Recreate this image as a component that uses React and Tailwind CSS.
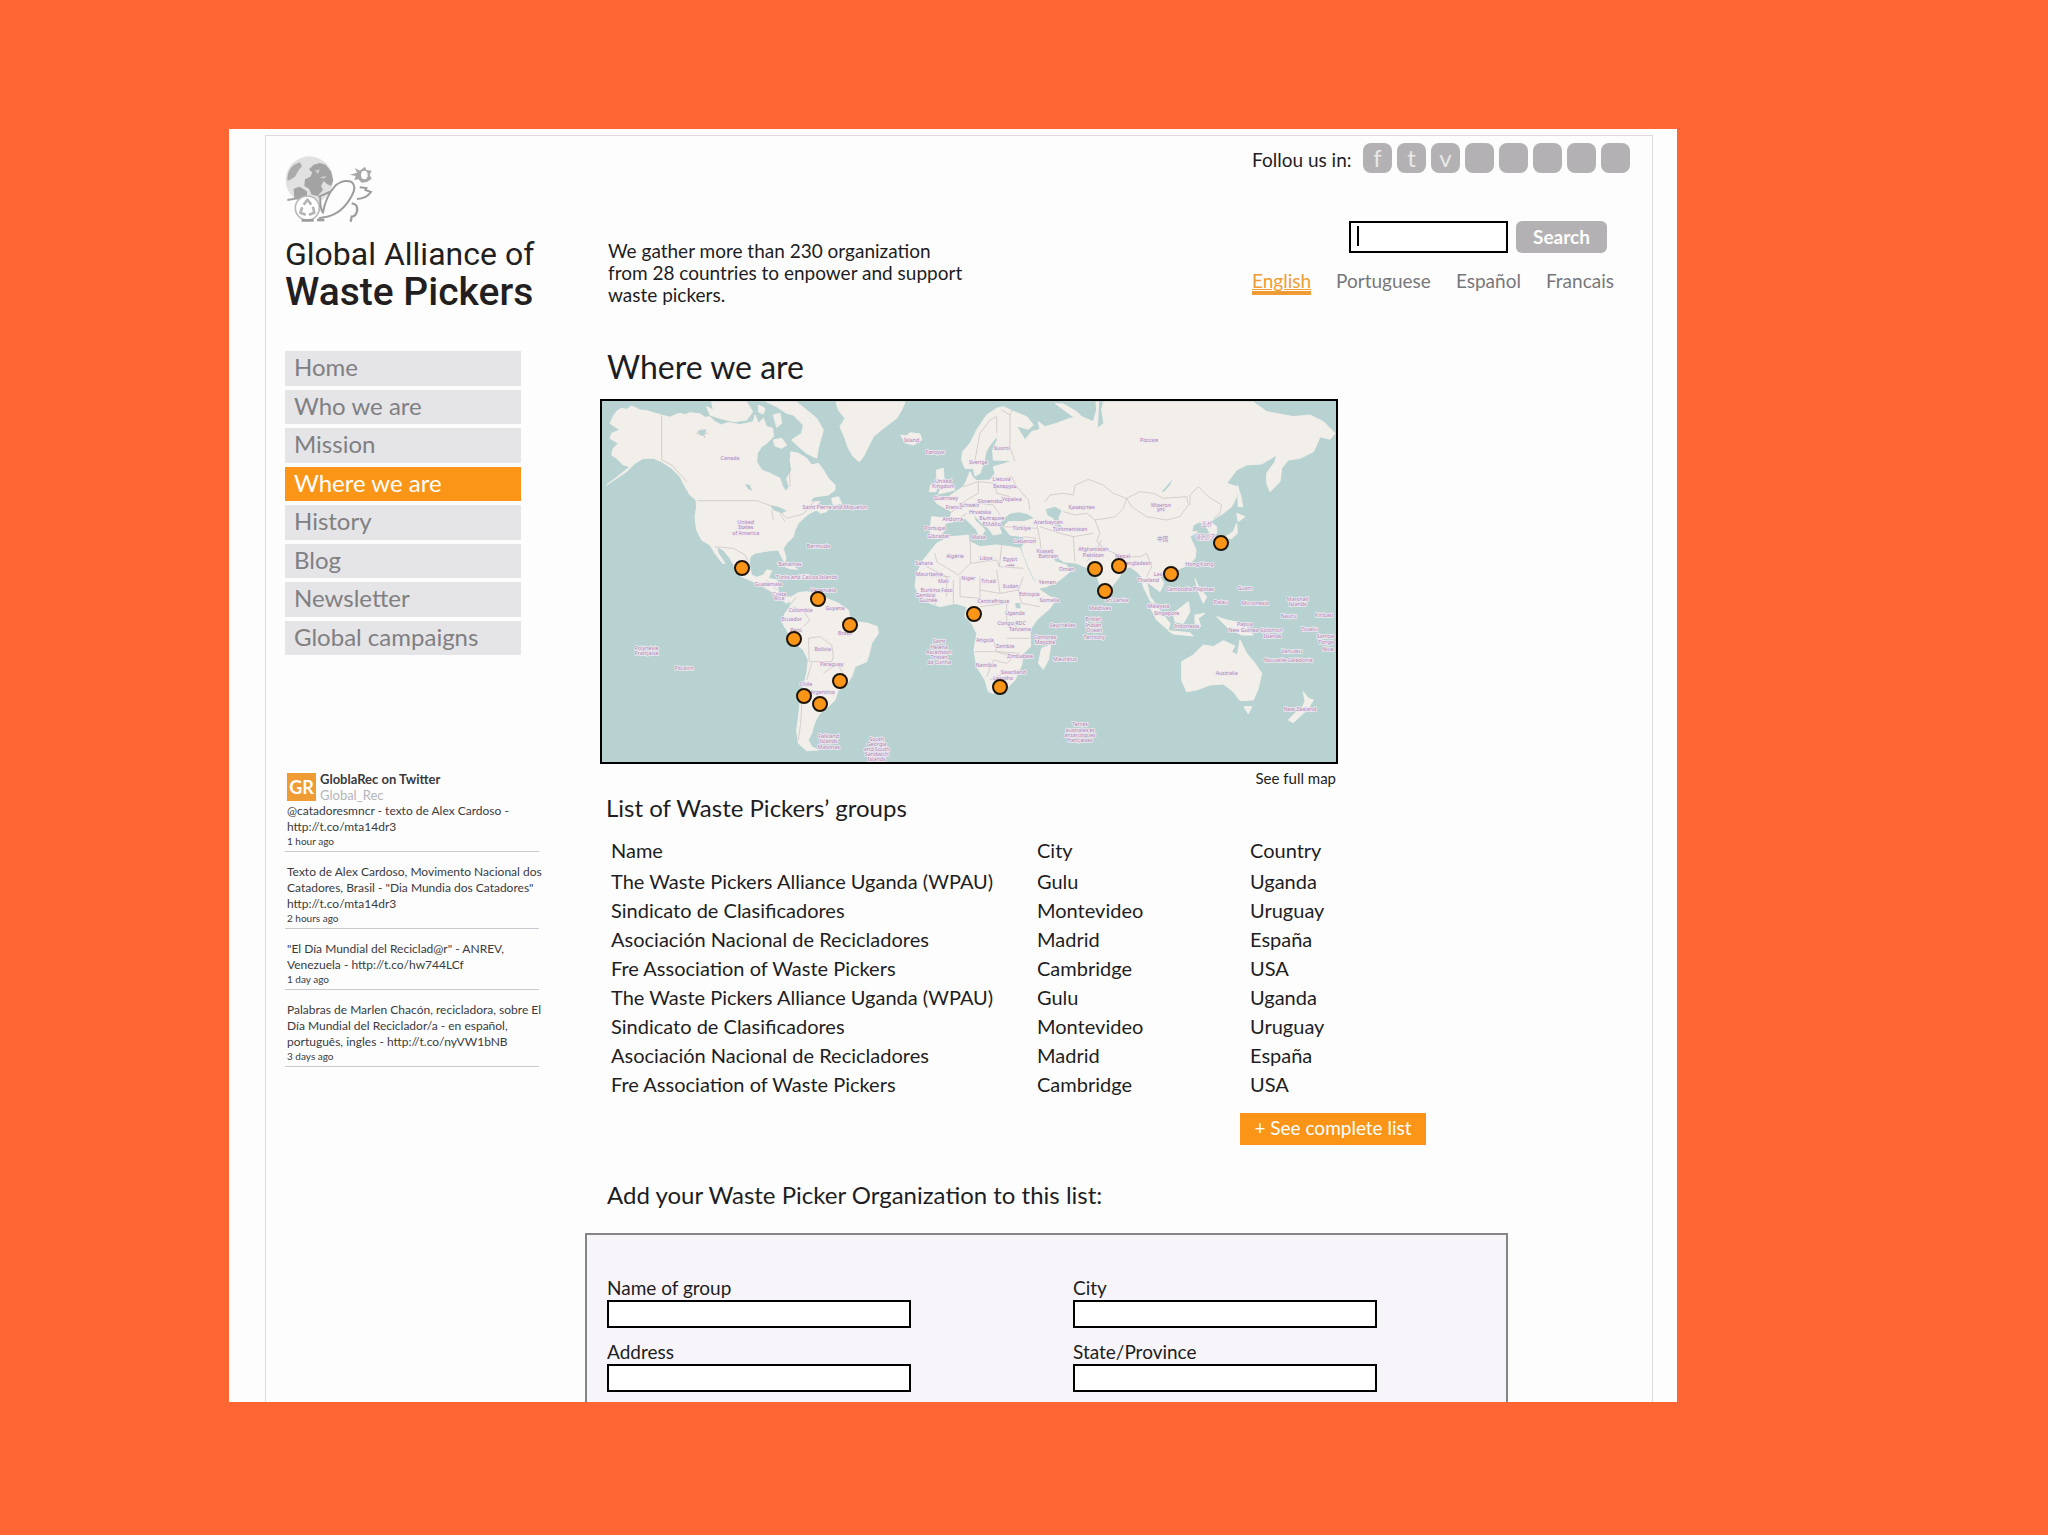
import React, { useState } from 'react';

const NAV = [
  'Home',
  'Who we are',
  'Mission',
  'Where we are',
  'History',
  'Blog',
  'Newsletter',
  'Global campaigns',
];

const LANGUAGES = ['English', 'Portuguese', 'Español', 'Francais'];

const SOCIAL = ['f', 't', 'v', '', '', '', '', ''];

const TWEETS = [
  { text: ['@catadoresmncr - texto de Alex Cardoso -', 'http://t.co/mta14dr3'], time: '1 hour ago' },
  {
    text: [
      'Texto de Alex Cardoso, Movimento Nacional dos',
      'Catadores, Brasil - "Dia Mundia dos Catadores"',
      'http://t.co/mta14dr3',
    ],
    time: '2 hours ago',
  },
  { text: ['"El Día Mundial del Reciclad@r" - ANREV,', 'Venezuela - http://t.co/hw744LCf'], time: '1 day ago' },
  {
    text: [
      'Palabras de Marlen Chacón, recicladora, sobre El',
      'Día Mundial del Reciclador/a - en español,',
      'português, ingles - http://t.co/nyVW1bNB',
    ],
    time: '3 days ago',
  },
];

const GROUPS = [
  ['The Waste Pickers Alliance Uganda (WPAU)', 'Gulu', 'Uganda'],
  ['Sindicato de Clasificadores', 'Montevideo', 'Uruguay'],
  ['Asociación Nacional de Recicladores', 'Madrid', 'España'],
  ['Fre Association of Waste Pickers', 'Cambridge', 'USA'],
];

const FIELDS = [
  { id: 'group', label: 'Name of group' },
  { id: 'city', label: 'City' },
  { id: 'address', label: 'Address' },
  { id: 'state', label: 'State/Province' },
];

const WEST_LAND = [
  'M72 75L82 62L95 55L110 58L125 48L150 60L170 62L190 68L215 75L240 82L256 74L270 70L285 74L300 68L330 72L345 82L360 80L375 95L395 105L412 98L430 100L450 104L470 100L490 95L495 75L505 100L520 85L530 110L548 115L550 140L530 160L515 170L502 190L500 215L515 240L540 250L570 265L578 290L588 305L597 290L590 265L605 240L600 215L603 185L625 190L650 205L665 225L685 220L700 240L715 265L735 285L735 300L715 315L690 318L670 322L660 335L690 335L680 345L700 355L720 345L710 365L690 370L680 360L655 372L640 385L625 400L615 420L610 440L590 460L580 475L588 505L583 515L572 495L565 480L540 482L520 485L495 490L480 500L478 530L485 555L500 562L520 555L530 540L545 542L535 565L560 570L563 590L565 610L580 625L600 620L605 630L590 640L570 625L545 605L520 590L490 575L455 560L435 545L432 525L420 505L400 480L380 470L385 490L405 520L398 520L375 490L360 465L335 450L320 420L315 380L320 350L318 330L300 315L285 290L270 260L245 235L215 215L190 205L160 205L135 220L110 245L80 265L50 285L85 258L120 230L100 225L80 205L65 195L70 175L85 160L60 145L65 130L90 120L60 100Z',
  'M530 36L620 36L650 60L680 85L700 120L690 155L685 175L680 205L650 190L620 165L605 150L635 130L640 105L610 75L590 70L560 50Z',
  'M350 50L370 60L365 36L470 36L488 65L470 90L430 95L390 85L360 75Z',
  'M505 45L525 55L520 72L506 66Z',
  'M550 75L570 70L575 100L560 112Z',
  'M550 150L575 145L590 165L575 175L555 168Z',
  'M725 325L745 320L755 340L730 345Z',
  'M738 36L945 36L935 60L920 85L880 115L850 140L835 170L820 200L808 215L790 200L775 175L765 145L750 110L765 85L745 60Z',
  'M932 135L950 138L960 128L990 132L995 150L970 165L945 158Z',
  'M560 520L590 516L622 538L600 536Z',
  'M625 555L655 553L662 565L630 567Z',
  'M605 620L625 608L650 605L680 610L710 625L745 640L775 660L780 685L800 695L835 700L862 710L865 730L845 760L838 790L830 815L795 830L785 860L765 890L745 900L735 930L710 955L690 970L680 985L670 1010L665 1030L655 1050L665 1070L685 1080L650 1082L625 1060L620 1020L625 985L630 940L640 890L650 850L655 810L640 780L610 755L590 720L575 695L585 670L600 650Z',
  'M1040 240L1060 235L1062 265L1085 290L1095 300L1045 312L1055 290L1040 270Z',
  'M1022 285L1040 280L1038 305L1018 305Z',
];

const EAST_LAND = [
  'M-85 380L-30 385L-25 365L-70 340L-75 330L-40 325L-20 310L10 290L20 270L30 245L38 262L50 272L90 270L105 250L100 230L130 222L160 212L100 210L98 180L112 150L110 140L90 165L78 185L72 215L60 250L45 258L40 235L15 235L5 210L8 185L30 160L50 120L80 75L110 55L130 50L155 62L200 80L220 105L205 118L170 108L180 125L195 150L215 125L240 118L235 95L255 110L290 100L330 85L365 80L400 95L410 60L408 36L416 36L412 115L432 100L425 60L430 36L880 36L920 65L1000 80L1050 75L1090 95L1125 130L1110 148L1080 140L1070 165L1060 185L1020 205L985 210L965 235L960 275L930 305L920 280L920 250L945 215L950 195L905 222L860 225L830 240L800 280L830 290L830 320L815 350L790 370L765 385L750 395L770 410L770 430L755 440L742 415L720 395L700 405L695 425L712 425L690 440L708 480L705 505L685 525L650 540L620 545L600 560L612 580L600 605L580 590L560 575L570 620L585 640L572 635L550 590L545 560L530 545L510 530L490 540L475 565L455 590L440 620L425 610L415 570L405 545L385 535L350 520L310 515L290 500L275 495L285 515L320 525L330 545L300 570L260 590L235 595L225 570L205 530L190 490L185 470L195 460L190 440L150 435L130 410L145 395L190 395L225 385L200 370L175 365L150 370L130 385L115 405L125 430L100 435L85 415L60 395L40 370L45 390L75 420L60 445L50 420L15 385L0 390L-20 395L-45 400L-50 425L-65 445L-85 445L-90 420Z',
  'M-70 460L-30 440L0 438L25 435L30 455L60 470L110 465L150 470L180 475L200 530L220 570L240 600L270 620L290 625L270 655L230 690L210 720L212 770L190 790L185 825L165 870L140 895L100 910L85 905L75 870L50 830L42 780L50 730L35 700L15 680L20 650L-15 640L-60 650L-90 640L-125 610L-135 590L-130 550L-110 510Z',
  'M245 775L272 765L265 810L250 838L235 820Z',
  'M285 40L310 42L350 65L375 90L340 80Z',
  'M830 370L855 380L835 395Z',
  'M830 400L832 430L815 445L790 450L770 450L800 438L820 425Z',
  'M832 285L843 320L848 350L835 350Z',
  'M665 815L700 795L730 765L760 770L790 752L825 768L815 785L832 795L840 750L860 790L885 820L905 850L895 895L880 930L840 932L820 905L790 882L750 885L710 900L680 905L665 870Z',
  'M852 950L875 950L865 972Z',
  'M1030 905L1045 925L1060 930L1045 955L1025 955L1035 935Z',
  'M1020 955L1035 965L1000 998L985 990Z',
  'M565 640L590 650L630 700L625 720L590 690Z',
  'M625 722L690 728L700 738L640 732Z',
  'M640 670L685 635L690 665L670 700L645 695Z',
  'M705 675L735 670L715 685L722 710L705 705Z',
  'M705 565L715 590L740 620L730 640L715 605Z',
  'M770 680L800 690L850 700L880 735L845 735L805 715Z',
];

const WEST_BORDERS =
  'M215 75L215 210L245 225L290 275M322 332L500 332L545 348L575 368L590 385L640 372L680 325M545 360L550 390M570 370L585 395M375 470L430 475L465 495L475 515M318 130L355 130M335 115L345 145M470 285L485 300M598 215L600 290M610 650L640 665L660 690L640 710M655 745L690 740L725 765L730 800L725 815L690 815L660 815M650 870L665 820M655 745L658 815M638 900L632 1000L625 1050M700 850L740 820L760 850M530 570L560 600M600 645L620 620';

const EAST_BORDERS =
  'M45 210L60 130L90 90L110 80L110 130M125 60L150 75L150 170L165 215M150 75L155 62M105 270L155 260L170 290L205 330L210 360M10 290L55 275L55 310L20 330M55 275L105 280L110 310L150 320M0 345L60 340L100 345L120 375M255 335L270 315L310 310L340 315L345 285L385 268L430 285L460 310L500 325L490 355L465 380L440 385L405 390L380 370L345 375L310 365M500 325L540 305L580 310L610 325L680 320L685 345L660 380L620 390L560 380L515 350L500 325M690 315L715 290L745 320L785 345L780 370L760 385M690 315L690 345M405 390L420 430L410 455L440 480L490 500L540 500L560 490L575 530L560 560M230 400L240 450L245 490L290 495M240 410L300 430L340 440L400 430M340 440L345 515M380 515L410 480L425 450M190 440L230 445M130 410L230 415M30 440L32 520L-5 555L-70 515L-75 490M32 520L110 510L118 530L125 465M118 530L190 535M110 540L120 610L175 600L190 560M0 560L0 620L60 625L60 560M60 600L120 610M175 600L185 640L240 650M60 650L140 640L140 700L170 710M45 745L100 750L110 785L45 785M110 785L180 790M140 745L210 745M80 860L100 810L140 820L160 800L110 785M90 870L130 850L180 840M-100 530L-40 560L-40 620M-75 610L-75 645M-20 570L-20 640M-90 560L-30 560M-30 370L20 330M-10 390L20 370';

const WEST_LABELS = [
  [420, 205, 'Canada'],
  [467, 397, 'United'],
  [467, 413, 'States'],
  [467, 430, 'of America'],
  [735, 352, 'Saint Pierre and Miquelon'],
  [685, 470, 'Bermuda'],
  [600, 522, 'Bahamas'],
  [650, 563, 'Turks and Caicos Islands'],
  [535, 582, 'Guatemala'],
  [568, 612, 'Costa'],
  [568, 626, 'Rica'],
  [700, 600, 'Venezuela'],
  [632, 662, 'Colombia'],
  [735, 655, 'Guyana'],
  [605, 687, 'Ecuador'],
  [618, 722, 'Perú'],
  [765, 730, 'Brasil'],
  [698, 777, 'Bolivia'],
  [725, 823, 'Paraguay'],
  [648, 882, 'Chile'],
  [697, 906, 'Argentina'],
  [170, 775, 'Polynésie'],
  [170, 790, 'Française'],
  [282, 835, 'Pitcairn'],
  [716, 1040, 'Falkland'],
  [716, 1055, 'Islands'],
  [716, 1071, 'Malvinas'],
  [860, 1047, 'South'],
  [860, 1062, 'Georgia'],
  [860, 1077, 'and South'],
  [860, 1092, 'Sandwich'],
  [860, 1107, 'Islands'],
  [1047, 755, 'Saint'],
  [1047, 771, 'Helena'],
  [1047, 787, 'Ascension'],
  [1047, 803, 'Tristan'],
  [1047, 818, 'da Cunha'],
  [965, 150, 'Ísland'],
  [1036, 188, 'Føroyar'],
  [1060, 275, 'United'],
  [1060, 290, 'Kingdom'],
  [1068, 325, 'Guernsey'],
  [1092, 352, 'France'],
  [1088, 388, 'Andorra'],
  [1035, 415, 'Portugal'],
  [1045, 440, 'Gibraltar'],
  [1095, 500, 'Algérie'],
  [1002, 520, 'Sahara'],
  [1018, 552, 'Mauritanie'],
  [1060, 575, 'Mali'],
  [1040, 600, 'Burkina Faso'],
  [1005, 615, 'Gambia'],
  [1015, 630, 'Guinée'],
];

const EAST_LABELS = [
  [567, 151, 'Россия'],
  [125, 175, 'Suomi'],
  [55, 218, 'Sverige'],
  [125, 268, 'Lietuva'],
  [135, 290, 'Беларусь'],
  [155, 328, 'Україна'],
  [90, 335, 'Slovensko'],
  [28, 347, 'Schweiz'],
  [60, 366, 'Hrvatska'],
  [95, 385, 'България'],
  [95, 403, 'Ελλάδα'],
  [55, 442, 'Malta'],
  [365, 352, 'Қазақстан'],
  [603, 345, 'Монгол'],
  [603, 358, 'улс'],
  [608, 449, '中国'],
  [265, 398, 'Azərbaycan'],
  [330, 417, 'Türkmenistan'],
  [185, 415, 'Türkiye'],
  [195, 455, 'Lebanon'],
  [255, 484, 'Kuwait'],
  [265, 500, 'Bahrain'],
  [400, 478, 'Afghanistan'],
  [400, 496, 'Pakistan'],
  [488, 498, 'Nepal'],
  [530, 520, 'Bangladesh'],
  [320, 538, 'Oman'],
  [262, 578, 'Yemen'],
  [150, 508, 'Egypt'],
  [150, 523, 'مصر'],
  [78, 505, 'Libya'],
  [25, 566, 'Niger'],
  [85, 574, 'Tchad'],
  [152, 588, 'Sudan'],
  [208, 614, 'Ethiopia'],
  [268, 632, 'Somalia'],
  [100, 635, 'Centrafrique'],
  [165, 670, 'Uganda'],
  [155, 700, 'Congo RDC'],
  [180, 718, 'Tanzania'],
  [75, 752, 'Angola'],
  [135, 769, 'Zambia'],
  [180, 800, 'Zimbabwe'],
  [78, 826, 'Namibia'],
  [160, 848, 'Swaziland'],
  [130, 864, 'Lesotho'],
  [255, 742, 'Comores'],
  [255, 757, 'Mayotte'],
  [315, 808, 'Mauritius'],
  [308, 705, 'Seychelles'],
  [400, 688, 'British'],
  [400, 705, 'Indian'],
  [403, 722, 'Ocean'],
  [403, 742, 'Territory'],
  [470, 630, 'Sri Lanka'],
  [420, 655, 'Maldives'],
  [718, 524, 'Hong Kong'],
  [595, 553, 'Lao'],
  [565, 572, 'Thailand'],
  [690, 598, 'Cambodia Pilipinas'],
  [595, 650, 'Malaysia'],
  [620, 670, 'Singapore'],
  [680, 708, 'Indonesia'],
  [740, 402, '조선'],
  [735, 443, '대한민국'],
  [855, 595, 'Guam'],
  [782, 638, 'Palau'],
  [885, 640, 'Micronesia'],
  [1013, 627, 'Marshall'],
  [1013, 643, 'Islands'],
  [986, 678, 'Nauru'],
  [1092, 676, 'Kiribati'],
  [1048, 718, 'Tuvalu'],
  [855, 703, 'Papua'],
  [850, 720, 'New Guinea'],
  [935, 722, 'Solomon'],
  [937, 740, 'Islands'],
  [1096, 738, 'Samoa'],
  [1098, 758, 'Tonga'],
  [1104, 778, 'Niue'],
  [995, 785, 'Vanuatu'],
  [985, 812, 'Nouvelle-Calédonie'],
  [800, 851, 'Australia'],
  [1020, 957, 'New Zealand'],
  [360, 1003, 'Terres'],
  [360, 1020, 'australes et'],
  [360, 1037, 'antarctiques'],
  [360, 1051, 'françaises'],
];

const PINS = [
  [141, 168],
  [217, 199],
  [249, 225],
  [193, 239],
  [239, 281],
  [203, 296],
  [219, 304],
  [373, 214],
  [399, 287],
  [494, 169],
  [518, 166],
  [504, 191],
  [570, 174],
  [620, 143],
];

const MapLabels = ({ labels }) => (
  <g className="font-['Noto_Sans','Noto_Sans_CJK_SC',sans-serif] text-[16px]" textAnchor="middle" fill="#ab86b0" stroke="#f0e8f0" strokeWidth="5" paintOrder="stroke" strokeLinejoin="round">
    {labels.map(([x, y, name]) => (
      <text key={name + y} x={x} y={y + 5}>{name}</text>
    ))}
  </g>
);

const WorldMap = () => (
  <div className="border-2 border-black bg-[#b8d2d2]">
    <svg viewBox="0 0 734 361" className="block w-full" role="img" aria-label="World map of waste picker groups">
      <g transform="translate(-12 -11) scale(0.33333)" strokeLinejoin="round">
        <g fill="#f2efea" stroke="#f2efea" strokeWidth="3">
          {WEST_LAND.map(d => <path key={d} d={d} />)}
        </g>
        <path d={WEST_BORDERS} fill="none" stroke="#c5bcbc" strokeWidth="2" />
        <g fill="#b8d2d2">
          <path d="M540 345L565 350L590 362L575 370L550 360Z" />
          <path d="M465 282L480 285L486 302L474 297Z" />
          <path d="M322 122L350 118L342 138L330 136Z" />
        </g>
      </g>
      <g transform="translate(358 -11) scale(0.33333)" strokeLinejoin="round">
        <g fill="#f2efea" stroke="#f2efea" strokeWidth="3">
          {EAST_LAND.map(d => <path key={d} d={d} />)}
        </g>
        <path d={EAST_BORDERS} fill="none" stroke="#c5bcbc" strokeWidth="2" />
        <g fill="#b8d2d2">
          <path d="M258 358L285 350L305 362L295 385L305 412L285 410L280 385L262 375Z" />
          <path d="M605 305L638 268L630 285L612 305Z" />
          <path d="M165 640L180 638L182 655L168 655Z" />
        </g>
      </g>
      <g transform="translate(-12 -11) scale(0.33333)">
        <MapLabels labels={WEST_LABELS} />
      </g>
      <g transform="translate(358 -11) scale(0.33333)">
        <MapLabels labels={EAST_LABELS} />
      </g>
      <g fill="#fb9517" stroke="#1c1408" strokeWidth="2">
        {PINS.map(([x, y]) => <circle key={`${x}-${y}`} cx={x - 1} cy={y - 1} r="7" />)}
      </g>
    </svg>
  </div>
);

const Logo = () => (
  <svg viewBox="196 100 276 210" className="block h-[70px] w-[92px]" fill="none" aria-hidden="true">
    <circle cx="269" cy="178" r="71" fill="#e2e1e2" />
    <path d="M203 180Q202 150 222 133L240 125L247 136L236 150L226 168L210 178Z" fill="#ababab" />
    <path d="M268 146L282 132L300 127L318 132L334 152L341 180L334 196L322 190L312 182L304 196L310 208L294 226L276 222L268 204L254 196L256 176L272 168L278 156Z" fill="#a3a3a3" />
    <path d="M285 150L300 146L296 160ZM300 170L320 166L314 174Z" fill="#cfcfcf" />
    <path d="M222 204L240 198L262 212L262 226L240 236L224 232Z" fill="#a3a3a3" />
    <path d="M203 238L238 232" stroke="#a3a3a3" strokeWidth="6" />
    <circle cx="263" cy="262" r="36" fill="#fff" stroke="#b8b8b8" strokeWidth="5" />
    <path d="M252 252L263 237L275 252M280 258L284 276L268 282M258 282L242 276L248 260" stroke="#b4b4b4" strokeWidth="8" strokeLinejoin="round" />
    <path d="M246 299H282M292 298H314" stroke="#9d9d9d" strokeWidth="8" />
    <path d="M298 228L330 214M302 232Q300 262 310 276M310 276Q318 226 348 194Q372 174 396 184Q412 198 396 226Q368 278 322 288L300 292" stroke="#9d9d9d" strokeWidth="6" strokeLinecap="round" />
    <path d="M390 162L412 156L406 142L420 150L436 138L440 148L456 150L450 162L456 174L442 184L426 186L416 176L404 178L408 166Z" fill="#a8a8a8" />
    <ellipse cx="434" cy="163" rx="10" ry="13" fill="#fff" />
    <path d="M420 200L440 202L437 208L454 214Q440 234 412 235" stroke="#9d9d9d" strokeWidth="6" />
    <path d="M396 248Q416 250 412 272Q408 288 396 288L393 303" stroke="#9d9d9d" strokeWidth="7" />
  </svg>
);

const Sidebar = () => {
  const [current, setCurrent] = useState('Where we are');
  return (
    <aside className="w-[300px] shrink-0 pt-[18px]">
      <Logo />
      <h1 className="mt-3 font-['Roboto',sans-serif] text-[#231f20]">
        <span className="block text-[32px] leading-9">Global Alliance of</span>
        <span className="block text-[39px] leading-10 font-medium">Waste Pickers</span>
      </h1>
      <nav className="mt-[39px] grid h-[304px] w-[236px] auto-rows-fr gap-1">
        {NAV.map(item => (
          <a
            key={item}
            href="#"
            onClick={() => setCurrent(item)}
            className={
              item === current
                ? 'flex items-center bg-[#fb9517] pb-[2px] pl-[9px] text-2xl leading-8 text-white'
                : 'flex items-center bg-[#e5e4e6] pb-[2px] pl-[9px] text-2xl leading-8 text-[#808083]'
            }
          >
            {item}
          </a>
        ))}
      </nav>
      <section className="mt-[116px] w-[254px] text-xs leading-4 text-[#3a3a3c]">
        <div className="flex items-center gap-1 pl-[2px]">
          <span className="flex h-7 w-[29px] items-center justify-center bg-[#ee9c33] text-lg font-bold text-white">GR</span>
          <div>
            <p className="text-[13px] font-bold">GloblaRec on Twitter</p>
            <p className="text-[13px] text-[#b5b5b8]">Global_Rec</p>
          </div>
        </div>
        {TWEETS.map((tweet, i) => (
          <article key={tweet.time} className={i === 0 ? 'border-b border-[#c9c9d0] pb-1 pl-[2px]' : 'border-b border-[#c9c9d0] pt-3 pb-1 pl-[2px]'}>
            {tweet.text.map(line => <p key={line} className="whitespace-nowrap">{line}</p>)}
            <p className="text-[10px] leading-3">{tweet.time}</p>
          </article>
        ))}
      </section>
    </aside>
  );
};

const Header = () => (
  <header className="flex items-start justify-between">
    <p className="pt-[104px] pl-[23px] text-[19px] leading-[22px]">
      We gather more than 230 organization
      <br />
      from 28 countries to enpower and support
      <br />
      waste pickers.
    </p>
    <div className="mr-[22px] w-[378px] pt-[7px]">
      <div className="flex items-center justify-between">
        <span className="pt-1 text-[19px] leading-6">Follou us in:</span>
        <div className="flex gap-[5px]">
          {SOCIAL.map((letter, i) => (
            <a key={i} href="#" className="flex h-[30px] w-[29px] items-center justify-center rounded-lg bg-[#b3b1b3] text-2xl text-[#e8e8e8]">
              {letter}
            </a>
          ))}
        </div>
      </div>
      <form className="mt-12 mr-[23px] flex justify-end gap-2" onSubmit={e => e.preventDefault()}>
        <div className="relative">
          <input type="text" aria-label="Search" className="block h-8 w-[159px] border-2 border-black bg-white px-2 outline-none" />
          <span className="absolute top-[5px] left-[8px] h-5 w-[2px] bg-black" />
        </div>
        <button type="submit" className="h-8 w-[91px] rounded-md bg-[#b3b1b3] text-[19px] leading-6 font-bold text-white">Search</button>
      </form>
      <div className="mt-4 mr-4 flex justify-between text-[19px] leading-6 text-[#77777a]">
        {LANGUAGES.map(lang => (
          <a
            key={lang}
            href="#"
            className={lang === 'English' ? 'h-[26px] border-b-4 border-[#ee9c33] text-[#ee9c33] underline' : undefined}
          >
            {lang}
          </a>
        ))}
      </div>
    </div>
  </header>
);

const GroupsTable = () => (
  <table className="mt-[10px] ml-[26px] text-left text-xl leading-[29px]">
    <thead>
      <tr>
        <th className="w-[426px] pb-[2px] font-normal">Name</th>
        <th className="w-[213px] pb-[2px] font-normal">City</th>
        <th className="w-[150px] pb-[2px] font-normal">Country</th>
      </tr>
    </thead>
    <tbody>
      {[...GROUPS, ...GROUPS].map(([name, city, country], i) => (
        <tr key={i}>
          <td>{name}</td>
          <td>{city}</td>
          <td>{country}</td>
        </tr>
      ))}
    </tbody>
  </table>
);

const App = () => (
  <div className="min-h-screen bg-[#ff6633] pt-[129px] pr-[371px] pb-[133px] pl-[229px] font-['Lato',sans-serif] text-[#1d1d22]">
    <div className="bg-[#fefdfe] pt-[6px] pr-6 pl-9">
      <div className="flex border-x border-t border-[#dedade] pl-[19px]">
        <Sidebar />
        <main className="min-w-0 grow">
          <Header />
          <h2 className="mt-[41px] pl-[22px] text-[32px] leading-10">Where we are</h2>
          <div className="mt-3 ml-[15px] w-[738px]">
            <WorldMap />
            <a href="#" className="mt-1 block pr-[2px] text-right text-[15px] leading-5">See full map</a>
          </div>
          <h3 className="mt-[2px] pl-[21px] text-2xl leading-9">List of Waste Pickers’ groups</h3>
          <GroupsTable />
          <button type="button" className="mt-[14px] ml-[655px] block h-8 w-[186px] bg-[#fb9517] pb-[2px] text-[19px] leading-6 text-white">+ See complete list</button>
          <h3 className="mt-8 pl-[22px] text-2xl leading-9">Add your Waste Picker Organization to this list:</h3>
          <form className="mt-5 grid w-[923px] grid-cols-[466px_1fr] gap-y-3 border-2 border-b-0 border-[#858588] bg-[#f7f5f9] pt-[41px] pb-[10px] pl-5">
            {FIELDS.map(({ id, label }) => (
              <div key={id}>
                <label htmlFor={id} className="block text-[19px] leading-6">{label}</label>
                <input id={id} type="text" className="block h-7 w-[304px] border-2 border-black bg-white px-2" />
              </div>
            ))}
          </form>
        </main>
      </div>
    </div>
  </div>
);

export default App;
